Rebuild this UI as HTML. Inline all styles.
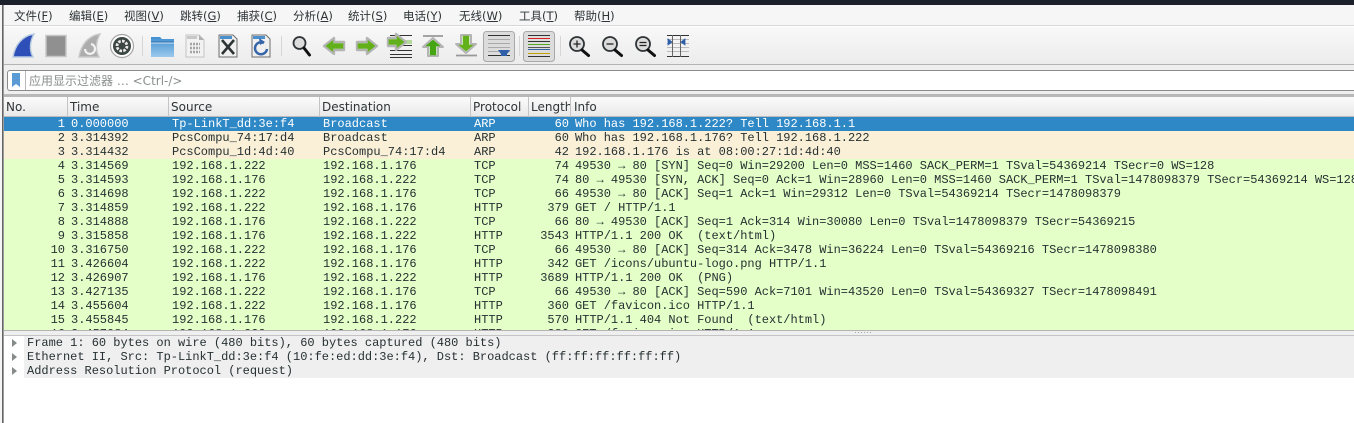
<!DOCTYPE html>
<html><head><meta charset="utf-8"><style>
*{box-sizing:border-box}
html,body{margin:0;padding:0;width:1354px;height:423px;overflow:hidden;background:#fff}
body{position:relative;font-family:"DejaVu Sans","Noto Sans CJK SC",sans-serif;color:#2e3436}
.a{position:absolute}
#menu span{position:absolute;top:9px;font-size:11.5px;line-height:14px;white-space:nowrap;color:#2e3436}
#menu u{text-decoration:underline}
.h{position:absolute;top:97px;height:20px;font-size:12px;line-height:20px;padding-left:3px;border-right:1px solid #c4c4c4;white-space:nowrap;overflow:hidden;color:#2e3436}
.r{position:absolute;left:4px;width:1350px;height:14px;font:12px/14px "Liberation Mono",monospace;color:#263032;white-space:pre}
.r span{position:absolute;top:0;white-space:pre}
.n{right:auto;width:61px;text-align:right;left:0}
.t{left:67px}.s{left:168px}.d{left:319px}.p{left:470px}.l{left:525px;width:40px;text-align:right}.i{left:571px;letter-spacing:-.018px}
.b{background:#e4ffc7}.g{background:#faf0d7}.sel{background:#2e88c6;color:#fff}
.dt{position:absolute;left:27px;font:12px/14px "Liberation Mono",monospace;color:#263032;white-space:pre;letter-spacing:-.012px}
.arr{position:absolute;left:12px;width:0;height:0;border-left:5px solid #858a8a;border-top:4px solid transparent;border-bottom:4px solid transparent}
svg{position:absolute;left:0;top:0}
</style></head><body>
<div class="a" style="left:0;top:0;width:1354px;height:5px;background:#1c202b"></div>
<div class="a" style="left:3px;top:5px;width:1351px;height:21px;background:#f6f6f6;border-bottom:1px solid #d8d8d8"></div>
<div id="menu" class="a" style="left:0;top:0;width:1354px;height:26px">
<span style="left:14px">文件(<u>F</u>)</span><span style="left:69px">编辑(<u>E</u>)</span><span style="left:124px">视图(<u>V</u>)</span><span style="left:180px">跳转(<u>G</u>)</span><span style="left:237px">捕获(<u>C</u>)</span><span style="left:293px">分析(<u>A</u>)</span><span style="left:348px">统计(<u>S</u>)</span><span style="left:403px">电话(<u>Y</u>)</span><span style="left:459px">无线(<u>W</u>)</span><span style="left:519px">工具(<u>T</u>)</span><span style="left:574px">帮助(<u>H</u>)</span>
</div>
<div class="a" style="left:3px;top:27px;width:1351px;height:38px;background:linear-gradient(#f8f8f8,#ececec);border-bottom:1px solid #b4b4b4"></div>
<svg width="1354" height="66" viewBox="0 0 1354 66">
<defs><linearGradient id="fo" x1="0" y1="0" x2="0" y2="1"><stop offset="0" stop-color="#3f8fd0"/><stop offset="1" stop-color="#9cc9ec"/></linearGradient></defs>
<!-- shark -->
<path d="M13 57C15 45 22 36 34 34C30 41 29 50 33 57Z" fill="#2f4fb8" stroke="#b8cce0" stroke-width="1.4"/>
<!-- stop -->
<rect x="46" y="35.500" width="20" height="21" fill="#909090" stroke="#c6c6c6" stroke-width="1.5"/>
<!-- restart -->
<path d="M79 57C81 45 88 36 100 34C96 41 95 50 99 57Z" fill="#adadad" stroke="#c8c8c8" stroke-width="1.4"/>
<path d="M85 49a5 5 0 1 0 6-5" fill="none" stroke="#f2f2f2" stroke-width="2.200"/>
<!-- options -->
<circle cx="122" cy="46" r="11.500" fill="#fff" stroke="#a4a4a4" stroke-width="1.200"/>
<circle cx="122" cy="46" r="9" fill="#3c4643"/>
<circle cx="122" cy="46" r="5" fill="none" stroke="#eaeaea" stroke-width="2.800" stroke-dasharray="2.600 1.300"/>
<circle cx="122" cy="46" r="2.500" fill="#3c4643"/>
<!-- seps -->
<g stroke="#d6d6d6" stroke-width="1"><path d="M142.500 36v20M281.500 36v20M519.500 36v20M560.500 36v20"/></g>
<!-- folder -->
<path d="M151 37h9l2 2h12v18h-23z" fill="url(#fo)"/><path d="M151 42h23" stroke="#2c6ba8" stroke-width="1"/><path d="M151 43h23" stroke="#cfe5f6" stroke-width="1"/>
<!-- file -->
<path d="M186 35h13l5 5v17h-18z" fill="#f2f2f2" stroke="#c4c4c4"/><path d="M186 35h13v5h5l-5-5z" fill="#b0b0b0"/><rect x="187" y="36" width="10" height="3" fill="#c8c8c8"/>
<path d="M190 44h10M190 48h10M190 52h10" stroke="#a4a4a4" stroke-width="2.500" stroke-dasharray="2 1"/>
<!-- close -->
<path d="M219 35h14l4 4v18h-18z" fill="#f0f0f0" stroke="#6e6e6e"/><path d="M220 36h12v3h-12z" fill="#4a90cc"/>
<path d="M222 40l12 14M234 40l-12 14" stroke="#2e3436" stroke-width="2.600"/>
<!-- reload -->
<path d="M252 35h14l4 4v18h-18z" fill="#f0f0f0" stroke="#6e6e6e"/><path d="M253 36h12v3h-12z" fill="#4a90cc"/>
<path d="M264 43a6 6 0 1 0 3 6" fill="none" stroke="#3565a8" stroke-width="2.500"/><path d="M259 38l6 4-5 3z" fill="#3565a8"/>
<!-- find -->
<circle cx="299.500" cy="43" r="6" fill="#dcdcdc" stroke="#2e3436" stroke-width="1.800"/><path d="M304 48l5.500 7" stroke="#111" stroke-width="3" stroke-linecap="round"/>
<!-- back -->
<g stroke-linejoin="round">
<path d="M324 46l10-8v4h10v8h-10v4z" fill="#fff" stroke="#b4b4b4" stroke-width="2.400"/>
<path d="M326 46l7-5.500v3h10v5h-10v3z" fill="#62b01a" stroke="#62b01a" stroke-width=".6"/>
<!-- forward -->
<path d="M377 46l-10-8v4h-10v8h10v4z" fill="#fff" stroke="#b4b4b4" stroke-width="2.400"/>
<path d="M375 46l-7-5.500v3h-10v5h10v3z" fill="#62b01a" stroke="#62b01a" stroke-width=".6"/>
</g>
<!-- goto -->
<g stroke="#333" stroke-width="1"><path d="M390 35.500h22M390 40.500h22M390 45.500h22M390 50.500h22M390 54.500h22M390 57.500h22"/></g>
<rect x="400" y="40" width="12" height="4" fill="#b5d99c"/>
<g stroke-linejoin="round">
<path d="M406 42l-10-8v4h-8v8h8v4z" fill="#fff" stroke="#b4b4b4" stroke-width="2.400"/>
<path d="M404 42l-7-5.500v3h-8v5h8v3z" fill="#62b01a" stroke="#62b01a" stroke-width=".6"/>
<!-- first -->
<path d="M423 36h20" stroke="#999" stroke-width="1.800"/>
<path d="M433 38l10 9h-5v9h-10v-9h-5z" fill="#fff" stroke="#b4b4b4" stroke-width="2"/>
<path d="M433 40l7 6h-4v9h-6v-9h-4z" fill="#45a515" stroke="#45a515" stroke-width=".6"/>
<!-- last -->
<path d="M456 55.500h21" stroke="#999" stroke-width="1.800"/>
<path d="M466 53l-10-9h5v-9h10v9h5z" fill="#fff" stroke="#b4b4b4" stroke-width="2"/>
<path d="M466 51l-7-6h4v-9h6v9h4z" fill="#62b01a" stroke="#62b01a" stroke-width=".6"/>
</g>
<!-- autoscroll button -->
<rect x="483.500" y="31.500" width="31" height="30" rx="3" fill="#dcdcdc" stroke="#a8a8a8"/>
<path d="M488 35.500h22M488 55.500h22" stroke="#333" stroke-width="1"/>
<path d="M488 39.500h22M488 43.500h22M488 47.500h22M488 51.500h22" stroke="#aaa" stroke-width="1"/>
<path d="M498 50h12l-3 4v2h-6v-2z" fill="#2f5fa8"/>
<!-- colorize button -->
<rect x="523.500" y="31.500" width="31" height="30" rx="3" fill="#dcdcdc" stroke="#a8a8a8"/>
<path d="M528 35.500h22" stroke="#333"/><path d="M528 38.500h22" stroke="#d92020"/><path d="M528 41.500h22" stroke="#333"/><path d="M528 44.500h22" stroke="#55aa22"/><path d="M528 47.500h22" stroke="#555"/><path d="M528 49.500h22" stroke="#3465a4"/><path d="M528 53.500h22" stroke="#c4a000"/><path d="M528 56.500h22" stroke="#333"/>
<!-- zoom in -->
<circle cx="577" cy="44" r="7" fill="#dcdcdc" stroke="#2e3436" stroke-width="1.800"/><path d="M582 50l6.500 5.500" stroke="#111" stroke-width="3" stroke-linecap="round"/><path d="M573.500 44h7M577 40.500v7" stroke="#222" stroke-width="1.300"/>
<!-- zoom out -->
<circle cx="610" cy="44" r="7" fill="#dcdcdc" stroke="#2e3436" stroke-width="1.800"/><path d="M615 50l6.500 5.500" stroke="#111" stroke-width="3" stroke-linecap="round"/><path d="M606.500 44h7" stroke="#222" stroke-width="1.300"/>
<!-- zoom 1:1 -->
<circle cx="643" cy="44" r="7" fill="#dcdcdc" stroke="#2e3436" stroke-width="1.800"/><path d="M648 50l6.500 5.500" stroke="#111" stroke-width="3" stroke-linecap="round"/><path d="M639.500 42.500h7M639.500 45.500h7" stroke="#222" stroke-width="1.300"/>
<!-- resize -->
<path d="M667 35.500h22M667 56.500h22" stroke="#333"/><path d="M667 39.500h22M667 43.500h22M667 47.500h22M667 51.500h22" stroke="#bbb"/>
<path d="M672.500 35v22M680.500 35v22" stroke="#666"/>
<path d="M668 39l4 3-4 3zM685 39l-4 3 4 3z" fill="#2f5fa8" stroke="#2f5fa8" stroke-width=".8"/>
</svg>
<!-- filter -->
<div class="a" style="left:3px;top:65px;width:1351px;height:29px;background:#efefef"></div>
<div class="a" style="left:7px;top:70px;width:1347px;height:21px;background:#fff;border:1px solid #8c8c8c;border-right:none;border-radius:3px 0 0 3px"></div>
<div class="a" style="left:25px;top:71px;width:1px;height:19px;background:#b8b8b8"></div>
<svg width="30" height="95" viewBox="0 0 30 95"><path d="M12 73h8v14l-4-3-4 3z" fill="#5b9bd5"/></svg>
<div class="a" style="left:29px;top:73px;font-size:12px;line-height:16px;color:#8a8e8e;white-space:nowrap">应用显示过滤器 … &lt;Ctrl-/&gt;</div>
<div class="a" style="left:3px;top:94px;width:1351px;height:3px;background:#b8b8b8"></div>
<!-- header -->
<div class="a" style="left:3px;top:97px;width:1351px;height:20px;background:linear-gradient(#fbfbfb,#e9e9e9);border-bottom:1px solid #bcbcbc"></div>
<div class="h" style="left:3px;width:65px">No.</div><div class="h" style="left:67px;width:102px">Time</div><div class="h" style="left:168px;width:152px">Source</div><div class="h" style="left:319px;width:152px">Destination</div><div class="h" style="left:470px;width:59px">Protocol</div><div class="h" style="left:528px;width:43px">Length</div><div class="h" style="left:571px;width:100px;border:none">Info</div>
<!-- rows -->
<div class="a" style="left:4px;top:117px;width:1350px;height:213px;overflow:hidden;background:#e4ffc7">
<div class="r sel" style="top:0;left:0"><span class="n">1</span><span class="t">0.000000</span><span class="s">Tp-LinkT_dd:3e:f4</span><span class="d">Broadcast</span><span class="p">ARP</span><span class="l">60</span><span class="i">Who has 192.168.1.222? Tell 192.168.1.1</span></div>
<div class="r g" style="top:14px;left:0"><span class="n">2</span><span class="t">3.314392</span><span class="s">PcsCompu_74:17:d4</span><span class="d">Broadcast</span><span class="p">ARP</span><span class="l">60</span><span class="i">Who has 192.168.1.176? Tell 192.168.1.222</span></div>
<div class="r g" style="top:28px;left:0"><span class="n">3</span><span class="t">3.314432</span><span class="s">PcsCompu_1d:4d:40</span><span class="d">PcsCompu_74:17:d4</span><span class="p">ARP</span><span class="l">42</span><span class="i">192.168.1.176 is at 08:00:27:1d:4d:40</span></div>
<div class="r b" style="top:42px;left:0"><span class="n">4</span><span class="t">3.314569</span><span class="s">192.168.1.222</span><span class="d">192.168.1.176</span><span class="p">TCP</span><span class="l">74</span><span class="i">49530 → 80 [SYN] Seq=0 Win=29200 Len=0 MSS=1460 SACK_PERM=1 TSval=54369214 TSecr=0 WS=128</span></div>
<div class="r b" style="top:56px;left:0"><span class="n">5</span><span class="t">3.314593</span><span class="s">192.168.1.176</span><span class="d">192.168.1.222</span><span class="p">TCP</span><span class="l">74</span><span class="i">80 → 49530 [SYN, ACK] Seq=0 Ack=1 Win=28960 Len=0 MSS=1460 SACK_PERM=1 TSval=1478098379 TSecr=54369214 WS=128</span></div>
<div class="r b" style="top:70px;left:0"><span class="n">6</span><span class="t">3.314698</span><span class="s">192.168.1.222</span><span class="d">192.168.1.176</span><span class="p">TCP</span><span class="l">66</span><span class="i">49530 → 80 [ACK] Seq=1 Ack=1 Win=29312 Len=0 TSval=54369214 TSecr=1478098379</span></div>
<div class="r b" style="top:84px;left:0"><span class="n">7</span><span class="t">3.314859</span><span class="s">192.168.1.222</span><span class="d">192.168.1.176</span><span class="p">HTTP</span><span class="l">379</span><span class="i">GET / HTTP/1.1</span></div>
<div class="r b" style="top:98px;left:0"><span class="n">8</span><span class="t">3.314888</span><span class="s">192.168.1.176</span><span class="d">192.168.1.222</span><span class="p">TCP</span><span class="l">66</span><span class="i">80 → 49530 [ACK] Seq=1 Ack=314 Win=30080 Len=0 TSval=1478098379 TSecr=54369215</span></div>
<div class="r b" style="top:112px;left:0"><span class="n">9</span><span class="t">3.315858</span><span class="s">192.168.1.176</span><span class="d">192.168.1.222</span><span class="p">HTTP</span><span class="l">3543</span><span class="i">HTTP/1.1 200 OK  (text/html)</span></div>
<div class="r b" style="top:126px;left:0"><span class="n">10</span><span class="t">3.316750</span><span class="s">192.168.1.222</span><span class="d">192.168.1.176</span><span class="p">TCP</span><span class="l">66</span><span class="i">49530 → 80 [ACK] Seq=314 Ack=3478 Win=36224 Len=0 TSval=54369216 TSecr=1478098380</span></div>
<div class="r b" style="top:140px;left:0"><span class="n">11</span><span class="t">3.426604</span><span class="s">192.168.1.222</span><span class="d">192.168.1.176</span><span class="p">HTTP</span><span class="l">342</span><span class="i">GET /icons/ubuntu-logo.png HTTP/1.1</span></div>
<div class="r b" style="top:154px;left:0"><span class="n">12</span><span class="t">3.426907</span><span class="s">192.168.1.176</span><span class="d">192.168.1.222</span><span class="p">HTTP</span><span class="l">3689</span><span class="i">HTTP/1.1 200 OK  (PNG)</span></div>
<div class="r b" style="top:168px;left:0"><span class="n">13</span><span class="t">3.427135</span><span class="s">192.168.1.222</span><span class="d">192.168.1.176</span><span class="p">TCP</span><span class="l">66</span><span class="i">49530 → 80 [ACK] Seq=590 Ack=7101 Win=43520 Len=0 TSval=54369327 TSecr=1478098491</span></div>
<div class="r b" style="top:182px;left:0"><span class="n">14</span><span class="t">3.455604</span><span class="s">192.168.1.222</span><span class="d">192.168.1.176</span><span class="p">HTTP</span><span class="l">360</span><span class="i">GET /favicon.ico HTTP/1.1</span></div>
<div class="r b" style="top:196px;left:0"><span class="n">15</span><span class="t">3.455845</span><span class="s">192.168.1.176</span><span class="d">192.168.1.222</span><span class="p">HTTP</span><span class="l">570</span><span class="i">HTTP/1.1 404 Not Found  (text/html)</span></div>
<div class="r b" style="top:210px;left:0"><span class="n">16</span><span class="t">3.457084</span><span class="s">192.168.1.222</span><span class="d">192.168.1.176</span><span class="p">HTTP</span><span class="l">380</span><span class="i">GET /favicon.ico HTTP/1.1</span></div>
</div>
<!-- splitter -->
<div class="a" style="left:3px;top:330px;width:1351px;height:6px;background:#efefef;border-top:1px solid #b4b4b4;border-bottom:1px solid #c4c4c4"></div>
<div class="a" style="left:855px;top:332px;width:16px;height:1px;background:repeating-linear-gradient(90deg,#a8a8a8 0 1px,transparent 1px 3px)"></div>
<!-- details -->
<div class="a" style="left:24px;top:336px;width:1330px;height:42px;background:#efefef"></div>
<div class="arr" style="top:339px"></div><div class="arr" style="top:353px"></div><div class="arr" style="top:367px"></div>
<div class="dt" style="top:336px">Frame 1: 60 bytes on wire (480 bits), 60 bytes captured (480 bits)</div>
<div class="dt" style="top:350px">Ethernet II, Src: Tp-LinkT_dd:3e:f4 (10:fe:ed:dd:3e:f4), Dst: Broadcast (ff:ff:ff:ff:ff:ff)</div>
<div class="dt" style="top:364px">Address Resolution Protocol (request)</div>
<!-- left edge -->
<div class="a" style="left:0;top:5px;width:2px;height:418px;background:#f4f4f4"></div>
<div class="a" style="left:2px;top:5px;width:2px;height:418px;background:#666"></div>
<div class="a" style="left:3px;top:5px;width:1px;height:418px;background:#9a9a9a"></div>
</body></html>
